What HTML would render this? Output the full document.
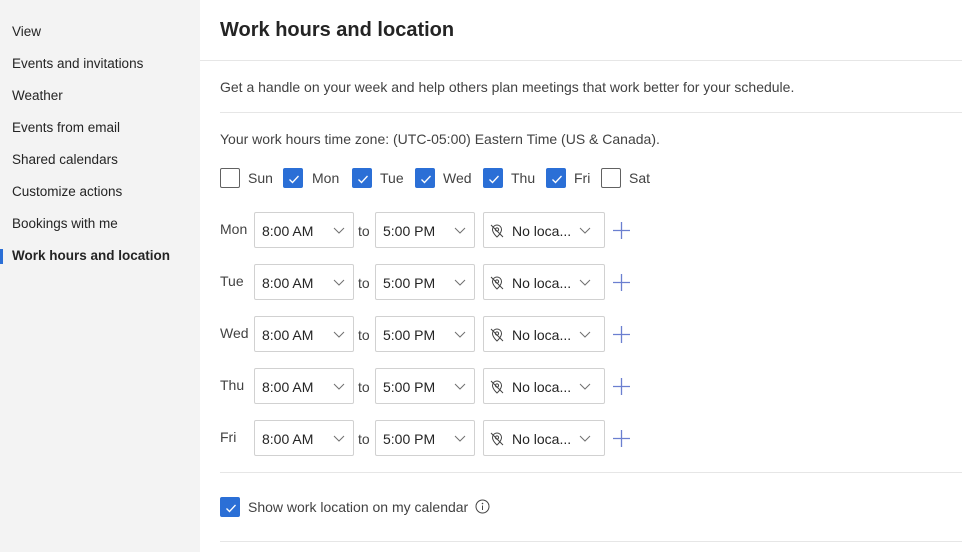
<!DOCTYPE html>
<html><head><style>
*{box-sizing:border-box;margin:0;padding:0}
body{width:962px;height:552px;overflow:hidden;background:#fff;font-family:"Liberation Sans",sans-serif;color:#242424;position:relative;font-size:14px}
.side{position:absolute;left:0;top:0;width:200px;height:552px;background:#f3f3f3}
.side div{position:absolute;left:12px;font-size:13.5px;color:#242424}
.a{position:absolute}
.ln{position:absolute;height:1px;background:#e6e6e6}
.cb{position:absolute;width:20px;height:20px;border:1px solid #616161;border-radius:2px;background:#fff}
.cb.on{background:#2b6fd6;border-color:#2b6fd6}
.cb.on svg{position:absolute;left:3px;top:3px}
.lbl{position:absolute;font-size:14px;color:#424242}
.sel{position:absolute;height:36px;border:1px solid #d1d1d1;border-radius:2px;background:#fff;font-size:14px;color:#242424}
.sel span{position:absolute;left:7px;top:10px}
.sel svg.ch{position:absolute;top:12px}
</style></head><body>
<div class="side">
<div style="top:24px">View</div>
<div style="top:56px">Events and invitations</div>
<div style="top:88px">Weather</div>
<div style="top:120px">Events from email</div>
<div style="top:152px">Shared calendars</div>
<div style="top:184px">Customize actions</div>
<div style="top:216px">Bookings with me</div>
<div style="top:248px;font-weight:bold">Work hours and location</div>
<span style="position:absolute;left:0;top:249px;width:3px;height:15px;background:#2b6fd6"></span>
</div>
<div class="a" style="left:220px;top:19px;font-size:20px;font-weight:bold;color:#242424">Work hours and location</div>
<div class="ln" style="left:200px;top:60px;width:762px"></div>
<div class="a" style="left:220px;top:79px;font-size:14px;color:#424242">Get a handle on your week and help others plan meetings that work better for your schedule.</div>
<div class="ln" style="left:220px;top:112px;width:742px"></div>
<div class="a" style="left:220px;top:131px;color:#424242">Your work hours time zone: (UTC-05:00) Eastern Time (US &amp; Canada).</div>

<div class="cb" style="left:220px;top:168px"></div><div class="lbl" style="left:248px;top:170px">Sun</div>
<div class="cb on" style="left:283px;top:168px"><svg width="14" height="14" viewBox="0 0 14 14"><path d="M2.5 7.5l3 3 6-6.5" stroke="#fff" stroke-width="1.3" fill="none"/></svg></div><div class="lbl" style="left:312px;top:170px">Mon</div>
<div class="cb on" style="left:352px;top:168px"><svg width="14" height="14" viewBox="0 0 14 14"><path d="M2.5 7.5l3 3 6-6.5" stroke="#fff" stroke-width="1.3" fill="none"/></svg></div><div class="lbl" style="left:380px;top:170px">Tue</div>
<div class="cb on" style="left:415px;top:168px"><svg width="14" height="14" viewBox="0 0 14 14"><path d="M2.5 7.5l3 3 6-6.5" stroke="#fff" stroke-width="1.3" fill="none"/></svg></div><div class="lbl" style="left:443px;top:170px">Wed</div>
<div class="cb on" style="left:483px;top:168px"><svg width="14" height="14" viewBox="0 0 14 14"><path d="M2.5 7.5l3 3 6-6.5" stroke="#fff" stroke-width="1.3" fill="none"/></svg></div><div class="lbl" style="left:511px;top:170px">Thu</div>
<div class="cb on" style="left:546px;top:168px"><svg width="14" height="14" viewBox="0 0 14 14"><path d="M2.5 7.5l3 3 6-6.5" stroke="#fff" stroke-width="1.3" fill="none"/></svg></div><div class="lbl" style="left:574px;top:170px">Fri</div>
<div class="cb" style="left:601px;top:168px"></div><div class="lbl" style="left:629px;top:170px">Sat</div>

<!-- rows -->
<div id="rows"></div>
<div class="lbl" style="left:220px;top:221px">Mon</div>
<div class="lbl" style="left:220px;top:273px">Tue</div>
<div class="lbl" style="left:220px;top:325px">Wed</div>
<div class="lbl" style="left:220px;top:377px">Thu</div>
<div class="lbl" style="left:220px;top:429px">Fri</div>

<div style="position:absolute;left:0;top:212px">
<div class="sel" style="left:254px;top:0;width:100px"><span>8:00 AM</span><svg class="ch" style="left:78px" width="12" height="10"><path d="M1 3l5 5 5-5" stroke="#707070" fill="none"/></svg></div>
<div class="lbl" style="left:358px;top:11px">to</div>
<div class="sel" style="left:375px;top:0;width:100px"><span>5:00 PM</span><svg class="ch" style="left:78px" width="12" height="10"><path d="M1 3l5 5 5-5" stroke="#707070" fill="none"/></svg></div>
<div class="sel" style="left:483px;top:0;width:122px"><svg style="position:absolute;left:5px;top:10px" width="16" height="16" viewBox="0 0 16 16"><path d="M8 14s4.5-4 4.5-7.5A4.5 4.5 0 0 0 3.5 6.5C3.5 10 8 14 8 14z" stroke="#424242" fill="none"/><circle cx="8" cy="6.5" r="1.6" stroke="#424242" fill="none"/><path d="M2 2l12 12" stroke="#424242"/></svg><span style="left:28px">No loca...</span><svg class="ch" style="left:95px" width="12" height="10"><path d="M1 3l5 5 5-5" stroke="#707070" fill="none"/></svg></div>
<svg style="position:absolute;left:613px;top:10px" width="17" height="17"><path d="M8.5 0v17M0 8.5h17" stroke="#6b7fd0" stroke-width="1.3"/></svg>
</div>
<div style="position:absolute;left:0;top:264px">
<div class="sel" style="left:254px;top:0;width:100px"><span>8:00 AM</span><svg class="ch" style="left:78px" width="12" height="10"><path d="M1 3l5 5 5-5" stroke="#707070" fill="none"/></svg></div>
<div class="lbl" style="left:358px;top:11px">to</div>
<div class="sel" style="left:375px;top:0;width:100px"><span>5:00 PM</span><svg class="ch" style="left:78px" width="12" height="10"><path d="M1 3l5 5 5-5" stroke="#707070" fill="none"/></svg></div>
<div class="sel" style="left:483px;top:0;width:122px"><svg style="position:absolute;left:5px;top:10px" width="16" height="16" viewBox="0 0 16 16"><path d="M8 14s4.5-4 4.5-7.5A4.5 4.5 0 0 0 3.5 6.5C3.5 10 8 14 8 14z" stroke="#424242" fill="none"/><circle cx="8" cy="6.5" r="1.6" stroke="#424242" fill="none"/><path d="M2 2l12 12" stroke="#424242"/></svg><span style="left:28px">No loca...</span><svg class="ch" style="left:95px" width="12" height="10"><path d="M1 3l5 5 5-5" stroke="#707070" fill="none"/></svg></div>
<svg style="position:absolute;left:613px;top:10px" width="17" height="17"><path d="M8.5 0v17M0 8.5h17" stroke="#6b7fd0" stroke-width="1.3"/></svg>
</div>
<div style="position:absolute;left:0;top:316px">
<div class="sel" style="left:254px;top:0;width:100px"><span>8:00 AM</span><svg class="ch" style="left:78px" width="12" height="10"><path d="M1 3l5 5 5-5" stroke="#707070" fill="none"/></svg></div>
<div class="lbl" style="left:358px;top:11px">to</div>
<div class="sel" style="left:375px;top:0;width:100px"><span>5:00 PM</span><svg class="ch" style="left:78px" width="12" height="10"><path d="M1 3l5 5 5-5" stroke="#707070" fill="none"/></svg></div>
<div class="sel" style="left:483px;top:0;width:122px"><svg style="position:absolute;left:5px;top:10px" width="16" height="16" viewBox="0 0 16 16"><path d="M8 14s4.5-4 4.5-7.5A4.5 4.5 0 0 0 3.5 6.5C3.5 10 8 14 8 14z" stroke="#424242" fill="none"/><circle cx="8" cy="6.5" r="1.6" stroke="#424242" fill="none"/><path d="M2 2l12 12" stroke="#424242"/></svg><span style="left:28px">No loca...</span><svg class="ch" style="left:95px" width="12" height="10"><path d="M1 3l5 5 5-5" stroke="#707070" fill="none"/></svg></div>
<svg style="position:absolute;left:613px;top:10px" width="17" height="17"><path d="M8.5 0v17M0 8.5h17" stroke="#6b7fd0" stroke-width="1.3"/></svg>
</div>
<div style="position:absolute;left:0;top:368px">
<div class="sel" style="left:254px;top:0;width:100px"><span>8:00 AM</span><svg class="ch" style="left:78px" width="12" height="10"><path d="M1 3l5 5 5-5" stroke="#707070" fill="none"/></svg></div>
<div class="lbl" style="left:358px;top:11px">to</div>
<div class="sel" style="left:375px;top:0;width:100px"><span>5:00 PM</span><svg class="ch" style="left:78px" width="12" height="10"><path d="M1 3l5 5 5-5" stroke="#707070" fill="none"/></svg></div>
<div class="sel" style="left:483px;top:0;width:122px"><svg style="position:absolute;left:5px;top:10px" width="16" height="16" viewBox="0 0 16 16"><path d="M8 14s4.5-4 4.5-7.5A4.5 4.5 0 0 0 3.5 6.5C3.5 10 8 14 8 14z" stroke="#424242" fill="none"/><circle cx="8" cy="6.5" r="1.6" stroke="#424242" fill="none"/><path d="M2 2l12 12" stroke="#424242"/></svg><span style="left:28px">No loca...</span><svg class="ch" style="left:95px" width="12" height="10"><path d="M1 3l5 5 5-5" stroke="#707070" fill="none"/></svg></div>
<svg style="position:absolute;left:613px;top:10px" width="17" height="17"><path d="M8.5 0v17M0 8.5h17" stroke="#6b7fd0" stroke-width="1.3"/></svg>
</div>
<div style="position:absolute;left:0;top:420px">
<div class="sel" style="left:254px;top:0;width:100px"><span>8:00 AM</span><svg class="ch" style="left:78px" width="12" height="10"><path d="M1 3l5 5 5-5" stroke="#707070" fill="none"/></svg></div>
<div class="lbl" style="left:358px;top:11px">to</div>
<div class="sel" style="left:375px;top:0;width:100px"><span>5:00 PM</span><svg class="ch" style="left:78px" width="12" height="10"><path d="M1 3l5 5 5-5" stroke="#707070" fill="none"/></svg></div>
<div class="sel" style="left:483px;top:0;width:122px"><svg style="position:absolute;left:5px;top:10px" width="16" height="16" viewBox="0 0 16 16"><path d="M8 14s4.5-4 4.5-7.5A4.5 4.5 0 0 0 3.5 6.5C3.5 10 8 14 8 14z" stroke="#424242" fill="none"/><circle cx="8" cy="6.5" r="1.6" stroke="#424242" fill="none"/><path d="M2 2l12 12" stroke="#424242"/></svg><span style="left:28px">No loca...</span><svg class="ch" style="left:95px" width="12" height="10"><path d="M1 3l5 5 5-5" stroke="#707070" fill="none"/></svg></div>
<svg style="position:absolute;left:613px;top:10px" width="17" height="17"><path d="M8.5 0v17M0 8.5h17" stroke="#6b7fd0" stroke-width="1.3"/></svg>
</div>

<div class="ln" style="left:220px;top:472px;width:742px"></div>
<div class="cb on" style="left:220px;top:497px"><svg width="14" height="14" viewBox="0 0 14 14"><path d="M2.5 7.5l3 3 6-6.5" stroke="#fff" stroke-width="1.3" fill="none"/></svg></div>
<div class="lbl" style="left:248px;top:499px">Show work location on my calendar</div>
<svg style="position:absolute;left:475px;top:499px" width="15" height="15" viewBox="0 0 15 15"><circle cx="7.5" cy="7.5" r="6.5" stroke="#424242" fill="none"/><path d="M7.5 6.5v4.5" stroke="#424242"/><circle cx="7.5" cy="4.5" r="0.8" fill="#424242"/></svg>
<div class="ln" style="left:220px;top:541px;width:742px"></div>
</body></html>
